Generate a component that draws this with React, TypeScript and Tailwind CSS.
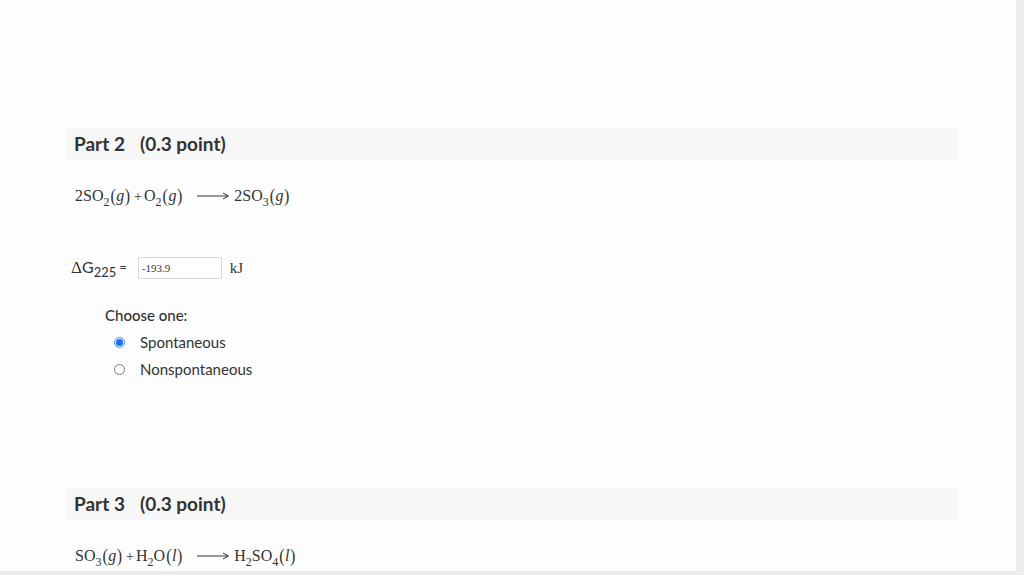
import React from "react";

const serif = { fontFamily: '"Liberation Serif", "Times New Roman", serif' } as const;

function Sub({ children }: { children: React.ReactNode }) {
  return <span className="relative top-[5px] text-[12px] leading-none">{children}</span>;
}

function G({ children }: { children: React.ReactNode }) {
  return (
    <span className="ml-[1px] inline-flex items-center">
      <span className="inline-block scale-y-[1.2] text-[16px] leading-none">(</span>
      <span className="px-[0.5px] italic" style={serif}>{children}</span>
      <span className="inline-block scale-y-[1.2] text-[16px] leading-none">)</span>
    </span>
  );
}

function Plus() {
  return <span className="ml-[4px] mr-[2px] text-[14px]">+</span>;
}

function Arrow() {
  return (
    <svg width="33" height="10" viewBox="0 0 33 10" className="ml-[15px] mr-[4px] inline-block">
      <line x1="0" y1="5" x2="30" y2="5" stroke="#333" strokeWidth="1" />
      <path d="M26 2 L31.5 5 L26 8" fill="none" stroke="#333" strokeWidth="1" />
    </svg>
  );
}

function Header({ n }: { n: number }) {
  return (
    <div className="flex h-[32px] items-center bg-[#f7f7f7] pl-[8px] text-[19px] font-bold text-[#333]" style={{ fontFamily: 'Lato, "Liberation Sans", sans-serif' }}>
      <span>Part {n}</span>
      <span className="ml-[15px]">(0.3 point)</span>
    </div>
  );
}

export default function App() {
  return (
    <div className="flex h-[575px] w-[1024px] overflow-hidden bg-[#ececec]" style={{ fontFamily: 'Lato, "Liberation Sans", sans-serif' }}>
      <div className="h-[571px] w-[1016px] bg-[#fdfdfd]">
        <div className="ml-[66px] w-[892px] pt-[128px]">
          <Header n={2} />
          <div className="mt-[24px] flex h-[24px] items-center pl-[9px] text-[16px] text-[#333]" style={serif}>
            <span>2SO<Sub>2</Sub></span>
            <G>g</G>
            <Plus />
            <span>O<Sub>2</Sub></span>
            <G>g</G>
            <Arrow />
            <span>2SO<Sub>3</Sub></span>
            <G>g</G>
          </div>
          <div className="mt-[47px] flex items-center pl-[5px] text-[#333]">
            <span className="text-[16px]"><span style={serif} className="text-[17px]">Δ</span>G<span className="relative top-[4px] text-[13px]">225</span></span>
            <span className="ml-[3px] text-[13px]">=</span>
            <div className="ml-[11px] flex h-[22px] w-[84px] items-center border border-[#d6d6d6] bg-white pl-[3px] text-[11px]" style={serif}>-193.9</div>
            <span className="ml-[8px] text-[15px]" style={serif}>kJ</span>
          </div>
          <div className="ml-[39px] mt-[23px] text-[15px] font-medium text-[#333]">Choose one:</div>
          <div className="ml-[48px] mt-[6px] flex flex-col gap-[7px] text-[15px] leading-[20px] text-[#333]">
            <div className="flex items-center">
              <span className="flex h-[11px] w-[11px] items-center justify-center rounded-full border border-[#4a90e2] bg-[#e6f0ff]">
                <span className="h-[7px] w-[7px] rounded-full bg-[#1a6ef0]" />
              </span>
              <span className="ml-[15px]">Spontaneous</span>
            </div>
            <div className="flex items-center">
              <span className="h-[11px] w-[11px] rounded-full border border-[#777] bg-white" />
              <span className="ml-[15px]">Nonspontaneous</span>
            </div>
          </div>
          <div className="mt-[109px]">
            <Header n={3} />
          </div>
          <div className="mt-[24px] flex h-[24px] items-center pl-[9px] text-[16px] text-[#333]" style={serif}>
            <span>SO<Sub>3</Sub></span>
            <G>g</G>
            <Plus />
            <span>H<Sub>2</Sub>O</span>
            <G>l</G>
            <Arrow />
            <span>H<Sub>2</Sub>SO<Sub>4</Sub></span>
            <G>l</G>
          </div>
        </div>
      </div>
    </div>
  );
}
